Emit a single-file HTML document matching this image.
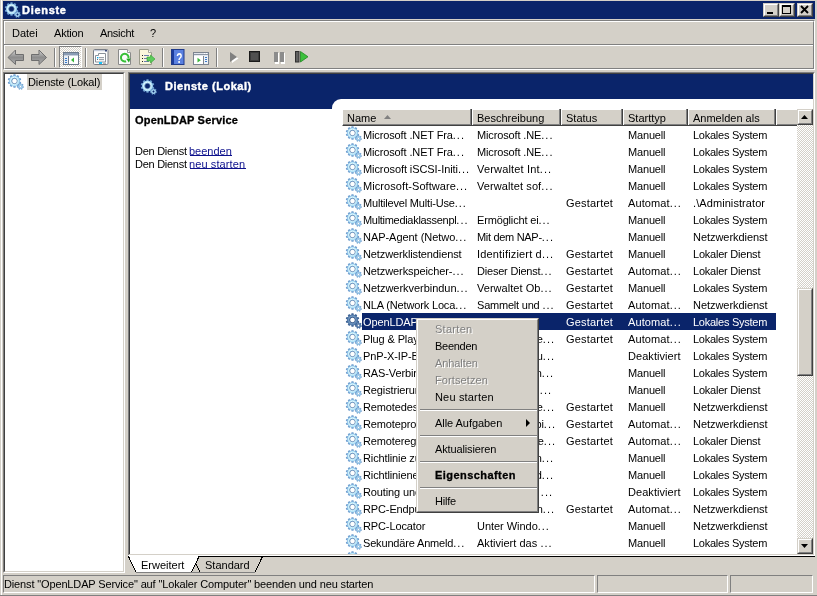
<!DOCTYPE html>
<html><head><meta charset="utf-8"><title>Dienste</title>
<style>
*{margin:0;padding:0;box-sizing:border-box}
html,body{width:817px;height:596px;overflow:hidden;background:#d4d0c8;font-family:"Liberation Sans",sans-serif;font-size:11px;color:#000}
.a{position:absolute}
.t{position:absolute;white-space:nowrap;line-height:13px}
.row{position:absolute;left:0;width:433px;height:17px}
.row .c{position:absolute;top:3px;line-height:13px;white-space:nowrap}
.row .gi{position:absolute;left:2px;top:0}
.row.sel .c{color:#fff}
.el{letter-spacing:1px}
.mi{position:absolute;line-height:13px;white-space:nowrap;letter-spacing:-0.25px}
.dis{color:#808080;text-shadow:1px 1px 0 #fff}
.msep{position:absolute;left:3px;width:117px;height:2px;border-top:1px solid #808080;border-bottom:1px solid #fff}
.chk{background-color:#fff;background-image:repeating-conic-gradient(#d4d0c8 0 25%,#fff 0 50%);background-size:2px 2px}
#w{position:absolute;left:0;top:0;width:817px;height:596px;will-change:transform}
</style></head><body><div id="w">
<svg width="0" height="0" style="position:absolute">
<defs>
<g id="gear"><path d="M6.44 1.60 L6.44 0.28 L8.56 0.28 L8.56 1.60 L9.81 2.01 L10.59 0.94 L12.31 2.19 L11.53 3.26 L12.30 4.32 L13.56 3.91 L14.22 5.94 L12.96 6.34 L12.96 7.66 L14.22 8.06 L13.56 10.09 L12.30 9.68 L11.53 10.74 L12.31 11.81 L10.59 13.06 L9.81 11.99 L8.56 12.40 L8.56 13.72 L6.44 13.72 L6.44 12.40 L5.19 11.99 L4.41 13.06 L2.69 11.81 L3.47 10.74 L2.70 9.68 L1.44 10.09 L0.78 8.06 L2.04 7.66 L2.04 6.34 L0.78 5.94 L1.44 3.91 L2.70 4.32 L3.47 3.26 L2.69 2.19 L4.41 0.94 L5.19 2.01Z M10.00 7.00 A2.5 2.5 0 1 0 5.00 7.00 A2.5 2.5 0 1 0 10.00 7.00Z" fill-rule="evenodd" fill="#6f9fd0"/><circle cx="7.5" cy="7" r="4.15" fill="none" stroke="#b2e2f8" stroke-width="2.1"/><circle cx="7.3" cy="6.8" r="3.6" fill="none" stroke="#e4faff" stroke-width="0.9"/><circle cx="7.5" cy="7" r="2.75" fill="none" stroke="#5a7ea8" stroke-width="0.6"/><path d="M12.76 10.11 L12.67 9.20 L14.33 9.20 L14.24 10.11 L14.91 10.43 L15.56 9.79 L16.60 11.09 L15.83 11.59 L15.99 12.31 L16.90 12.42 L16.53 14.04 L15.66 13.75 L15.20 14.33 L15.68 15.11 L14.18 15.83 L13.87 14.97 L13.13 14.97 L12.82 15.83 L11.32 15.11 L11.80 14.33 L11.34 13.75 L10.47 14.04 L10.10 12.42 L11.01 12.31 L11.17 11.59 L10.40 11.09 L11.44 9.79 L12.09 10.43Z M14.40 12.50 A0.9 0.9 0 1 0 12.60 12.50 A0.9 0.9 0 1 0 14.40 12.50Z" fill-rule="evenodd" fill="#6f9fd0"/><circle cx="13.5" cy="12.5" r="1.75" fill="none" stroke="#b8e4f8" stroke-width="0.9"/></g>
<g id="gears"><path d="M6.44 1.60 L6.44 0.28 L8.56 0.28 L8.56 1.60 L9.81 2.01 L10.59 0.94 L12.31 2.19 L11.53 3.26 L12.30 4.32 L13.56 3.91 L14.22 5.94 L12.96 6.34 L12.96 7.66 L14.22 8.06 L13.56 10.09 L12.30 9.68 L11.53 10.74 L12.31 11.81 L10.59 13.06 L9.81 11.99 L8.56 12.40 L8.56 13.72 L6.44 13.72 L6.44 12.40 L5.19 11.99 L4.41 13.06 L2.69 11.81 L3.47 10.74 L2.70 9.68 L1.44 10.09 L0.78 8.06 L2.04 7.66 L2.04 6.34 L0.78 5.94 L1.44 3.91 L2.70 4.32 L3.47 3.26 L2.69 2.19 L4.41 0.94 L5.19 2.01Z M10.00 7.00 A2.5 2.5 0 1 0 5.00 7.00 A2.5 2.5 0 1 0 10.00 7.00Z" fill-rule="evenodd" fill="#3d6294"/><circle cx="7.5" cy="7" r="4.15" fill="none" stroke="#5a82b0" stroke-width="2.1"/><circle cx="7.3" cy="6.8" r="3.6" fill="none" stroke="#7aa0c8" stroke-width="0.9"/><circle cx="7.5" cy="7" r="2.75" fill="none" stroke="#2a4a7a" stroke-width="0.6"/><path d="M12.76 10.11 L12.67 9.20 L14.33 9.20 L14.24 10.11 L14.91 10.43 L15.56 9.79 L16.60 11.09 L15.83 11.59 L15.99 12.31 L16.90 12.42 L16.53 14.04 L15.66 13.75 L15.20 14.33 L15.68 15.11 L14.18 15.83 L13.87 14.97 L13.13 14.97 L12.82 15.83 L11.32 15.11 L11.80 14.33 L11.34 13.75 L10.47 14.04 L10.10 12.42 L11.01 12.31 L11.17 11.59 L10.40 11.09 L11.44 9.79 L12.09 10.43Z M14.40 12.50 A0.9 0.9 0 1 0 12.60 12.50 A0.9 0.9 0 1 0 14.40 12.50Z" fill-rule="evenodd" fill="#3d6294"/><circle cx="13.5" cy="12.5" r="1.75" fill="none" stroke="#6a90bc" stroke-width="0.9"/></g>
<linearGradient id="ag" x1="0" y1="0" x2="0" y2="1"><stop offset="0" stop-color="#d8d8d8"/><stop offset="0.5" stop-color="#8c8c8c"/><stop offset="1" stop-color="#b0b0b0"/></linearGradient>
</defs></svg>

<!-- window frame -->
<div class="a" style="left:1px;top:0;width:1px;height:596px;background:#fff"></div>
<div class="a" style="left:0;top:595px;width:817px;height:1px;background:#808080"></div>

<!-- title bar -->
<div class="a" style="left:3px;top:1px;width:812px;height:18px;background:#0a246a"></div>
<svg class="a" style="left:4px;top:2px" width="17" height="17"><use href="#gear"/></svg>
<div class="t" style="left:22px;top:4px;color:#fff;font-weight:bold;letter-spacing:0.7px;-webkit-text-stroke:0.4px #fff">Dienste</div>
<div class="a" style="left:763px;top:3px;width:16px;height:14px;border-style:solid;border-width:1px;border-color:#d4d0c8 #404040 #404040 #d4d0c8;background:#d4d0c8"></div><div class="a" style="left:764px;top:4px;width:14px;height:12px;border-style:solid;border-width:1px;border-color:#fff #808080 #808080 #fff;"></div>
<div class="a" style="left:767px;top:12px;width:6px;height:2px;background:#000"></div>
<div class="a" style="left:779px;top:3px;width:16px;height:14px;border-style:solid;border-width:1px;border-color:#d4d0c8 #404040 #404040 #d4d0c8;background:#d4d0c8"></div><div class="a" style="left:780px;top:4px;width:14px;height:12px;border-style:solid;border-width:1px;border-color:#fff #808080 #808080 #fff;"></div>
<div class="a" style="left:782px;top:5px;width:9px;height:9px;border:1px solid #000;border-top-width:2px"></div>
<div class="a" style="left:797px;top:3px;width:16px;height:14px;border-style:solid;border-width:1px;border-color:#d4d0c8 #404040 #404040 #d4d0c8;background:#d4d0c8"></div><div class="a" style="left:798px;top:4px;width:14px;height:12px;border-style:solid;border-width:1px;border-color:#fff #808080 #808080 #fff;"></div>
<svg class="a" style="left:800px;top:5px" width="10" height="9"><path d="M1 1 L8 8 M8 1 L1 8" stroke="#000" stroke-width="1.9"/></svg>

<!-- rebar -->
<div class="a" style="left:3px;top:20px;width:812px;height:50px;border-style:solid;border-width:1px;border-color:#808080 #fff #fff #808080;"></div>
<div class="a" style="left:4px;top:21px;width:810px;height:48px;border-style:solid;border-width:1px;border-color:#fff #808080 #808080 #fff;"></div>
<div class="a" style="left:4px;top:44px;width:809px;height:1px;background:#808080"></div>
<div class="a" style="left:4px;top:45px;width:809px;height:1px;background:#fff"></div>
<div class="t" style="left:12px;top:27px">Datei</div>
<div class="t" style="left:54px;top:27px;letter-spacing:-0.2px">Aktion</div>
<div class="t" style="left:100px;top:27px;letter-spacing:-0.3px">Ansicht</div>
<div class="t" style="left:150px;top:27px">?</div>

<!-- toolbar -->
<svg class="a" style="left:7px;top:49px" width="18" height="17"><path d="M1 8.5 L8.5 1 L8.5 5.5 L16.5 5.5 L16.5 11.5 L8.5 11.5 L8.5 15.5 Z" fill="url(#ag)" stroke="#6e6e6e" stroke-width="1"/></svg>
<svg class="a" style="left:30px;top:49px" width="18" height="17"><path d="M16.5 8.5 L9 1 L9 5.5 L1.5 5.5 L1.5 11.5 L9 11.5 L9 15.5 Z" fill="url(#ag)" stroke="#6e6e6e" stroke-width="1"/></svg>
<div class="a" style="left:54px;top:48px;width:1px;height:19px;background:#808080"></div><div class="a" style="left:55px;top:48px;width:1px;height:19px;background:#fff"></div>
<div class="a" style="left:59px;top:46px;width:23px;height:22px;border-style:solid;border-width:1px;border-color:#808080 #fff #fff #808080;"></div>
<div class="a chk" style="left:60px;top:47px;width:21px;height:20px"></div>
<svg class="a" style="left:63px;top:52px" width="16" height="13"><rect x="0.5" y="0.5" width="15" height="12" fill="#fff" stroke="#6c7a8c"/><rect x="1" y="1" width="14" height="2" fill="#8a9cb4"/><rect x="1" y="3" width="14" height="1" fill="#c8d0dc"/><rect x="1" y="4" width="4" height="8" fill="#e8eef6"/><rect x="5" y="4" width="1" height="8" fill="#6c7a8c"/><rect x="2" y="6" width="2" height="1" fill="#3a7ac8"/><rect x="2" y="8" width="2" height="1" fill="#3a7ac8"/><rect x="2" y="10" width="2" height="1" fill="#3a7ac8"/><path d="M8 8 L11 5.5 L11 10.5Z" fill="#3cb83c"/></svg>
<div class="a" style="left:85px;top:48px;width:1px;height:19px;background:#808080"></div><div class="a" style="left:86px;top:48px;width:1px;height:19px;background:#fff"></div>
<svg class="a" style="left:93px;top:49px" width="16" height="16"><rect x="0.5" y="0.5" width="14.5" height="15" rx="1.2" fill="#fdfdfd" stroke="#7a7e86"/><rect x="1" y="1" width="13.5" height="1.2" fill="#c4ccdc"/><rect x="12" y="1" width="2" height="1.5" fill="#3a4a7a"/><path d="M2.5 6.5 L5.5 6.5 L5.5 4.5 L12.5 4.5 L12.5 13 L2.5 13 Z" fill="#fff" stroke="#8a929a"/><rect x="4" y="8" width="1.4" height="1.4" fill="#10b0f0"/><rect x="4" y="10" width="1" height="1" fill="#6a7078"/><rect x="6" y="8" width="5" height="1.2" fill="#9aa0a8"/><rect x="6" y="10" width="5" height="1.2" fill="#9aa0a8"/><rect x="6" y="13" width="3" height="2" fill="#18c0f8"/><rect x="10" y="13.5" width="3" height="1.5" fill="#b8b8b8"/></svg>
<svg class="a" style="left:118px;top:49px" width="14" height="16"><path d="M0.5 0.5 L9.5 0.5 L12.5 3.5 L12.5 15.5 L0.5 15.5Z" fill="#fbfbfb" stroke="#8a8a8a"/><path d="M9.5 0.5 L9.5 3.5 L12.5 3.5" fill="#fff" stroke="#9a9a9a"/><path d="M8.1 12.2 A3.8 3.8 0 1 1 10.5 9.3" fill="none" stroke="#38c038" stroke-width="2"/><path d="M8.2 9.8 L12.6 9.4 L10.9 13.4Z" fill="#20a820"/></svg>
<svg class="a" style="left:139px;top:49px" width="17" height="16"><path d="M0.5 0.5 L9.5 0.5 L12.5 3.5 L12.5 15.5 L0.5 15.5Z" fill="#fbf6dc" stroke="#9a9a8a"/><path d="M9.5 0.5 L9.5 3.5 L12.5 3.5" fill="#fff" stroke="#a8a8a0"/><rect x="3" y="6" width="1" height="1" fill="#202020"/><rect x="5" y="6" width="5" height="1" fill="#7080b0"/><rect x="3" y="9" width="1" height="1" fill="#202020"/><rect x="5" y="9" width="5" height="1" fill="#7080b0"/><rect x="3" y="12" width="1" height="1" fill="#202020"/><rect x="5" y="12" width="5" height="1" fill="#7080b0"/><path d="M8 8 L11.5 8 L11.5 6 L16 10 L11.5 14 L11.5 12 L8 12 Z" fill="#5ccc5c" stroke="#30a030" stroke-width="0.6"/></svg>
<div class="a" style="left:162px;top:48px;width:1px;height:19px;background:#808080"></div><div class="a" style="left:163px;top:48px;width:1px;height:19px;background:#fff"></div>
<svg class="a" style="left:171px;top:49px" width="14" height="16"><rect x="0" y="0" width="13" height="16" fill="#3c64d0"/><rect x="0" y="0" width="3" height="16" fill="#1c3c9c"/><rect x="3" y="0" width="10" height="16" fill="#5a80e0"/><rect x="0.5" y="0.5" width="12.5" height="15" fill="none" stroke="#203a8a"/><text x="0" y="0" transform="translate(8.3 13.6) scale(0.72 1)" font-family="Liberation Sans" font-weight="bold" font-size="14" fill="#fff" text-anchor="middle">?</text></svg>
<svg class="a" style="left:193px;top:52px" width="16" height="13"><rect x="0.5" y="0.5" width="15" height="12" fill="#fff" stroke="#7c8490"/><rect x="1" y="1" width="14" height="1" fill="#dfe3ea"/><rect x="11" y="1" width="1" height="1" fill="#fff"/><rect x="13" y="1" width="1" height="1" fill="#fff"/><rect x="1" y="2" width="14" height="1" fill="#8c96a4"/><rect x="1" y="3" width="14" height="1" fill="#e6eaf0"/><rect x="10" y="4" width="1" height="8" fill="#7c8490"/><rect x="11" y="4" width="4" height="8" fill="#eef2f8"/><rect x="12" y="5" width="2" height="1" fill="#3a7ac8"/><rect x="12" y="7" width="2" height="1" fill="#3a7ac8"/><rect x="12" y="9" width="2" height="1" fill="#3a7ac8"/><path d="M4.5 5.8 L7.8 8.2 L4.5 10.6Z" fill="#3cb83c"/></svg>
<div class="a" style="left:216px;top:48px;width:1px;height:19px;background:#808080"></div><div class="a" style="left:217px;top:48px;width:1px;height:19px;background:#fff"></div>
<svg class="a" style="left:229px;top:51px" width="11" height="13"><path d="M2 2 L8.5 6.5 L2 11Z" fill="#fff" transform="translate(1,1)"/><path d="M1 1 L8 6 L1 11Z" fill="#808080"/></svg>
<svg class="a" style="left:249px;top:51px" width="12" height="12"><rect x="0.5" y="0.5" width="10" height="10" fill="#3a3a3a" stroke="#1a1a1a"/><rect x="2" y="2" width="7" height="7" fill="#505050"/></svg>
<svg class="a" style="left:273px;top:51px" width="12" height="13"><rect x="2" y="2" width="4" height="11" fill="#fff"/><rect x="8" y="2" width="4" height="11" fill="#fff"/><rect x="1" y="1" width="4" height="10" fill="#8c8c8c"/><rect x="7" y="1" width="4" height="10" fill="#8c8c8c"/></svg>
<svg class="a" style="left:295px;top:51px" width="15" height="12"><rect x="0.5" y="0.5" width="3.5" height="10.5" fill="#606060" stroke="#303030"/><path d="M5.5 0.5 L13 5.75 L5.5 11Z" fill="#3cc03c" stroke="#208820" stroke-width="0.8"/></svg>

<!-- tree pane -->
<div class="a" style="left:3px;top:72px;width:122px;height:501px;border-style:solid;border-width:1px;border-color:#808080 #fff #fff #808080;"></div><div class="a" style="left:4px;top:73px;width:120px;height:499px;border-style:solid;border-width:1px;border-color:#404040 #d4d0c8 #d4d0c8 #404040;background:#fff"></div>
<svg class="a" style="left:7px;top:74px" width="17" height="17"><use href="#gear"/></svg>
<div class="a" style="left:27px;top:74px;width:75px;height:16px;background:#d4d0c8"></div>
<div class="t" style="left:28px;top:76px;letter-spacing:-0.12px">Dienste (Lokal)</div>

<!-- right pane -->
<div class="a" style="left:128px;top:72px;width:687px;height:484px;border-style:solid;border-width:1px;border-color:#808080 #fff #fff #808080;"></div><div class="a" style="left:129px;top:73px;width:685px;height:482px;border-style:solid;border-width:1px;border-color:#404040 #d4d0c8 #d4d0c8 #404040;background:#fff"></div>
<div class="a" style="left:130px;top:74px;width:683px;height:25px;background:#0a246a"></div>
<div class="a" style="left:130px;top:99px;width:203px;height:10px;background:#0a246a"></div>
<div class="a" style="left:332px;top:99px;width:20px;height:10px;background:#0a246a"></div>
<div class="a" style="left:332px;top:99px;width:20px;height:12px;background:#fff;border-top-left-radius:9px"></div>
<svg class="a" style="left:140px;top:79px" width="17" height="17"><use href="#gear"/></svg>
<div class="t" style="left:165px;top:80px;color:#fff;font-weight:bold;letter-spacing:0.53px;-webkit-text-stroke:0.4px #fff">Dienste (Lokal)</div>
<div class="t" style="left:135px;top:114px;font-weight:bold;letter-spacing:0.19px;-webkit-text-stroke:0.3px #000">OpenLDAP Service</div>
<div class="t" style="left:135px;top:145px;letter-spacing:-0.27px">Den Dienst</div><div class="t" style="left:189px;top:145px;color:#0c108c">beenden</div><div class="a" style="left:190px;top:155px;width:42px;height:1px;background:#0c108c"></div>
<div class="t" style="left:135px;top:158px;letter-spacing:-0.27px">Den Dienst</div><div class="t" style="left:189px;top:158px;color:#0c108c;letter-spacing:0.1px">neu starten</div><div class="a" style="left:190px;top:168px;width:56px;height:1px;background:#0c108c"></div>

<!-- list header -->
<div class="a" style="left:342px;top:109px;width:455px;height:17px;background:#d4d0c8;border-top:1px solid #fff;border-left:1px solid #fff;border-bottom:1px solid #404040">
  <div class="a" style="left:0;top:14px;width:454px;height:1px;background:#808080"></div>
</div>
<span class="t" style="left:347px;top:112px">Name</span>
<svg class="a" style="left:384px;top:115px" width="7" height="4"><path d="M3.5 0 L7 4 L0 4 Z" fill="#808080"/></svg>
<div class="a" style="left:470px;top:109px;width:1px;height:16px;background:#808080"></div><div class="a" style="left:471px;top:109px;width:1px;height:16px;background:#404040"></div><div class="a" style="left:472px;top:110px;width:1px;height:15px;background:#fff"></div><div class="a" style="left:559px;top:109px;width:1px;height:16px;background:#808080"></div><div class="a" style="left:560px;top:109px;width:1px;height:16px;background:#404040"></div><div class="a" style="left:561px;top:110px;width:1px;height:15px;background:#fff"></div><div class="a" style="left:621px;top:109px;width:1px;height:16px;background:#808080"></div><div class="a" style="left:622px;top:109px;width:1px;height:16px;background:#404040"></div><div class="a" style="left:623px;top:110px;width:1px;height:15px;background:#fff"></div><div class="a" style="left:686px;top:109px;width:1px;height:16px;background:#808080"></div><div class="a" style="left:687px;top:109px;width:1px;height:16px;background:#404040"></div><div class="a" style="left:688px;top:110px;width:1px;height:15px;background:#fff"></div><div class="a" style="left:774px;top:109px;width:1px;height:16px;background:#808080"></div><div class="a" style="left:775px;top:109px;width:1px;height:16px;background:#404040"></div><div class="a" style="left:776px;top:110px;width:1px;height:15px;background:#fff"></div>
<span class="t" style="left:477px;top:112px">Beschreibung</span>
<span class="t" style="left:566px;top:112px">Status</span>
<span class="t" style="left:628px;top:112px">Starttyp</span>
<span class="t" style="left:693px;top:112px">Anmelden als</span>

<!-- selection -->
<div class="a" style="left:362px;top:313px;width:414px;height:17px;background:#0a246a"></div>
<div class="a" style="left:343px;top:126px;width:455px;height:428px;overflow:hidden">
<div class="row" style="top:0px"><svg class="gi" width="17" height="17"><use href="#gear"/></svg><span class="c" style="left:20px;letter-spacing:-0.128px">Microsoft .NET Fra<span class="el">...</span></span><span class="c" style="left:134px;letter-spacing:-0.131px">Microsoft .NE<span class="el">...</span></span><span class="c" style="left:285px;letter-spacing:-0.17px">Manuell</span><span class="c" style="left:350px;letter-spacing:-0.25px">Lokales System</span></div><div class="row" style="top:17px"><svg class="gi" width="17" height="17"><use href="#gear"/></svg><span class="c" style="left:20px;letter-spacing:-0.128px">Microsoft .NET Fra<span class="el">...</span></span><span class="c" style="left:134px;letter-spacing:-0.131px">Microsoft .NE<span class="el">...</span></span><span class="c" style="left:285px;letter-spacing:-0.17px">Manuell</span><span class="c" style="left:350px;letter-spacing:-0.25px">Lokales System</span></div><div class="row" style="top:34px"><svg class="gi" width="17" height="17"><use href="#gear"/></svg><span class="c" style="left:20px;letter-spacing:-0.081px">Microsoft iSCSI-Initi<span class="el">...</span></span><span class="c" style="left:134px;letter-spacing:0.177px">Verwaltet Int<span class="el">...</span></span><span class="c" style="left:285px;letter-spacing:-0.17px">Manuell</span><span class="c" style="left:350px;letter-spacing:-0.25px">Lokales System</span></div><div class="row" style="top:51px"><svg class="gi" width="17" height="17"><use href="#gear"/></svg><span class="c" style="left:20px;letter-spacing:0.072px">Microsoft-Software<span class="el">...</span></span><span class="c" style="left:134px;letter-spacing:0.1px">Verwaltet sof<span class="el">...</span></span><span class="c" style="left:285px;letter-spacing:-0.17px">Manuell</span><span class="c" style="left:350px;letter-spacing:-0.25px">Lokales System</span></div><div class="row" style="top:68px"><svg class="gi" width="17" height="17"><use href="#gear"/></svg><span class="c" style="left:20px;letter-spacing:-0.185px">Multilevel Multi-Use<span class="el">...</span></span><span class="c" style="left:223px;letter-spacing:0.19px">Gestartet</span><span class="c" style="left:285px;letter-spacing:0.11px">Automat<span class="el">...</span></span><span class="c" style="left:350px;letter-spacing:0.08px">.\Administrator</span></div><div class="row" style="top:85px"><svg class="gi" width="17" height="17"><use href="#gear"/></svg><span class="c" style="left:20px;letter-spacing:-0.3px">Multimediaklassenpl<span class="el">...</span></span><span class="c" style="left:134px;letter-spacing:-0.162px">Ermöglicht ei<span class="el">...</span></span><span class="c" style="left:285px;letter-spacing:-0.17px">Manuell</span><span class="c" style="left:350px;letter-spacing:-0.25px">Lokales System</span></div><div class="row" style="top:102px"><svg class="gi" width="17" height="17"><use href="#gear"/></svg><span class="c" style="left:20px;letter-spacing:-0.044px">NAP-Agent (Netwo<span class="el">...</span></span><span class="c" style="left:134px;letter-spacing:-0.308px">Mit dem NAP-<span class="el">...</span></span><span class="c" style="left:285px;letter-spacing:-0.17px">Manuell</span><span class="c" style="left:350px;letter-spacing:-0.05px">Netzwerkdienst</span></div><div class="row" style="top:119px"><svg class="gi" width="17" height="17"><use href="#gear"/></svg><span class="c" style="left:20px;letter-spacing:-0.12px">Netzwerklistendienst</span><span class="c" style="left:134px;letter-spacing:0.167px">Identifiziert d<span class="el">...</span></span><span class="c" style="left:223px;letter-spacing:0.19px">Gestartet</span><span class="c" style="left:285px;letter-spacing:-0.17px">Manuell</span><span class="c" style="left:350px;letter-spacing:-0.22px">Lokaler Dienst</span></div><div class="row" style="top:136px"><svg class="gi" width="17" height="17"><use href="#gear"/></svg><span class="c" style="left:20px;letter-spacing:-0.1px">Netzwerkspeicher-<span class="el">...</span></span><span class="c" style="left:134px;letter-spacing:-0.2px">Dieser Dienst<span class="el">...</span></span><span class="c" style="left:223px;letter-spacing:0.19px">Gestartet</span><span class="c" style="left:285px;letter-spacing:0.11px">Automat<span class="el">...</span></span><span class="c" style="left:350px;letter-spacing:-0.22px">Lokaler Dienst</span></div><div class="row" style="top:153px"><svg class="gi" width="17" height="17"><use href="#gear"/></svg><span class="c" style="left:20px;letter-spacing:-0.041px">Netzwerkverbindun<span class="el">...</span></span><span class="c" style="left:134px;letter-spacing:0.033px">Verwaltet Ob<span class="el">...</span></span><span class="c" style="left:223px;letter-spacing:0.19px">Gestartet</span><span class="c" style="left:285px;letter-spacing:-0.17px">Manuell</span><span class="c" style="left:350px;letter-spacing:-0.25px">Lokales System</span></div><div class="row" style="top:170px"><svg class="gi" width="17" height="17"><use href="#gear"/></svg><span class="c" style="left:20px;letter-spacing:-0.153px">NLA (Network Loca<span class="el">...</span></span><span class="c" style="left:134px;letter-spacing:-0.208px">Sammelt und <span class="el">...</span></span><span class="c" style="left:223px;letter-spacing:0.19px">Gestartet</span><span class="c" style="left:285px;letter-spacing:0.11px">Automat<span class="el">...</span></span><span class="c" style="left:350px;letter-spacing:-0.05px">Netzwerkdienst</span></div><div class="row sel" style="top:187px"><svg class="gi" width="17" height="17"><use href="#gears"/></svg><span class="c" style="left:20px;letter-spacing:-0.12px">OpenLDAP Service</span><span class="c" style="left:223px;letter-spacing:0.19px">Gestartet</span><span class="c" style="left:285px;letter-spacing:0.11px">Automat<span class="el">...</span></span><span class="c" style="left:350px;letter-spacing:-0.25px">Lokales System</span></div><div class="row" style="top:204px"><svg class="gi" width="17" height="17"><use href="#gear"/></svg><span class="c" style="left:20px;letter-spacing:-0.12px">Plug &amp; Play</span><span class="c" style="right:221px;letter-spacing:-0.12px">Ermöglicht eine<span class="el">...</span></span><span class="c" style="left:223px;letter-spacing:0.19px">Gestartet</span><span class="c" style="left:285px;letter-spacing:0.11px">Automat<span class="el">...</span></span><span class="c" style="left:350px;letter-spacing:-0.25px">Lokales System</span></div><div class="row" style="top:221px"><svg class="gi" width="17" height="17"><use href="#gear"/></svg><span class="c" style="left:20px;letter-spacing:-0.12px">PnP-X-IP-Busenu<span class="el">...</span></span><span class="c" style="right:221px;letter-spacing:-0.12px">Der PnP-X-Bu<span class="el">...</span></span><span class="c" style="left:285px;letter-spacing:0.05px">Deaktiviert</span><span class="c" style="left:350px;letter-spacing:-0.25px">Lokales System</span></div><div class="row" style="top:238px"><svg class="gi" width="17" height="17"><use href="#gear"/></svg><span class="c" style="left:20px;letter-spacing:-0.12px">RAS-Verbindungs<span class="el">...</span></span><span class="c" style="right:222px;letter-spacing:-0.12px">Verwaltet DFÜn<span class="el">...</span></span><span class="c" style="left:285px;letter-spacing:-0.17px">Manuell</span><span class="c" style="left:350px;letter-spacing:-0.25px">Lokales System</span></div><div class="row" style="top:255px"><svg class="gi" width="17" height="17"><use href="#gear"/></svg><span class="c" style="left:20px;letter-spacing:-0.12px">Registrierungsd<span class="el">...</span></span><span class="c" style="right:224px;letter-spacing:-0.12px">Ermöglicht das <span class="el">...</span></span><span class="c" style="left:285px;letter-spacing:-0.17px">Manuell</span><span class="c" style="left:350px;letter-spacing:-0.22px">Lokaler Dienst</span></div><div class="row" style="top:272px"><svg class="gi" width="17" height="17"><use href="#gear"/></svg><span class="c" style="left:20px;letter-spacing:-0.12px">Remotedesktop<span class="el">...</span></span><span class="c" style="right:221px;letter-spacing:-0.12px">Ermöglicht Be<span class="el">...</span></span><span class="c" style="left:223px;letter-spacing:0.19px">Gestartet</span><span class="c" style="left:285px;letter-spacing:-0.17px">Manuell</span><span class="c" style="left:350px;letter-spacing:-0.05px">Netzwerkdienst</span></div><div class="row" style="top:289px"><svg class="gi" width="17" height="17"><use href="#gear"/></svg><span class="c" style="left:20px;letter-spacing:-0.12px">Remoteprozedu<span class="el">...</span></span><span class="c" style="right:220px;letter-spacing:-0.12px">Der RPCSS-Dpi<span class="el">...</span></span><span class="c" style="left:223px;letter-spacing:0.19px">Gestartet</span><span class="c" style="left:285px;letter-spacing:0.11px">Automat<span class="el">...</span></span><span class="c" style="left:350px;letter-spacing:-0.05px">Netzwerkdienst</span></div><div class="row" style="top:306px"><svg class="gi" width="17" height="17"><use href="#gear"/></svg><span class="c" style="left:20px;letter-spacing:-0.12px">Remoteregistri<span class="el">...</span></span><span class="c" style="right:220px;letter-spacing:-0.12px">Ermöglicht Re<span class="el">...</span></span><span class="c" style="left:223px;letter-spacing:0.19px">Gestartet</span><span class="c" style="left:285px;letter-spacing:0.11px">Automat<span class="el">...</span></span><span class="c" style="left:350px;letter-spacing:-0.22px">Lokaler Dienst</span></div><div class="row" style="top:323px"><svg class="gi" width="17" height="17"><use href="#gear"/></svg><span class="c" style="left:20px;letter-spacing:-0.12px">Richtlinie zum E<span class="el">...</span></span><span class="c" style="right:222px;letter-spacing:-0.12px">Ermöglicht un<span class="el">...</span></span><span class="c" style="left:285px;letter-spacing:-0.17px">Manuell</span><span class="c" style="left:350px;letter-spacing:-0.25px">Lokales System</span></div><div class="row" style="top:340px"><svg class="gi" width="17" height="17"><use href="#gear"/></svg><span class="c" style="left:20px;letter-spacing:-0.12px">Richtlinienerge<span class="el">...</span></span><span class="c" style="right:222px;letter-spacing:-0.12px">Bietet Netzd<span class="el">...</span></span><span class="c" style="left:285px;letter-spacing:-0.17px">Manuell</span><span class="c" style="left:350px;letter-spacing:-0.25px">Lokales System</span></div><div class="row" style="top:357px"><svg class="gi" width="17" height="17"><use href="#gear"/></svg><span class="c" style="left:20px;letter-spacing:-0.12px">Routing und RAS</span><span class="c" style="right:223px;letter-spacing:-0.12px">Bietet Unter <span class="el">...</span></span><span class="c" style="left:285px;letter-spacing:0.05px">Deaktiviert</span><span class="c" style="left:350px;letter-spacing:-0.25px">Lokales System</span></div><div class="row" style="top:374px"><svg class="gi" width="17" height="17"><use href="#gear"/></svg><span class="c" style="left:20px;letter-spacing:-0.12px">RPC-Endpunktzu<span class="el">...</span></span><span class="c" style="right:221px;letter-spacing:-0.12px">Löst RPC-Schn<span class="el">...</span></span><span class="c" style="left:223px;letter-spacing:0.19px">Gestartet</span><span class="c" style="left:285px;letter-spacing:0.11px">Automat<span class="el">...</span></span><span class="c" style="left:350px;letter-spacing:-0.05px">Netzwerkdienst</span></div><div class="row" style="top:391px"><svg class="gi" width="17" height="17"><use href="#gear"/></svg><span class="c" style="left:20px;letter-spacing:-0.12px">RPC-Locator</span><span class="c" style="left:134px;letter-spacing:-0.036px">Unter Windo<span class="el">...</span></span><span class="c" style="left:285px;letter-spacing:-0.17px">Manuell</span><span class="c" style="left:350px;letter-spacing:-0.05px">Netzwerkdienst</span></div><div class="row" style="top:408px"><svg class="gi" width="17" height="17"><use href="#gear"/></svg><span class="c" style="left:20px;letter-spacing:-0.169px">Sekundäre Anmeld<span class="el">...</span></span><span class="c" style="left:134px;letter-spacing:0.029px">Aktiviert das <span class="el">...</span></span><span class="c" style="left:285px;letter-spacing:-0.17px">Manuell</span><span class="c" style="left:350px;letter-spacing:-0.25px">Lokales System</span></div><div class="row" style="top:425px"><svg class="gi" width="17" height="17"><use href="#gear"/></svg><span class="c" style="left:20px;letter-spacing:-0.12px">Server</span></div>
</div>

<!-- scrollbar -->
<div class="a chk" style="left:797px;top:125px;width:16px;height:413px"></div>
<div class="a" style="left:797px;top:109px;width:16px;height:16px;border-style:solid;border-width:1px;border-color:#d4d0c8 #404040 #404040 #d4d0c8;background:#d4d0c8"></div><div class="a" style="left:798px;top:110px;width:14px;height:14px;border-style:solid;border-width:1px;border-color:#fff #808080 #808080 #fff;"></div>
<svg class="a" style="left:801px;top:115px" width="7" height="4"><path d="M3.5 0 L7 4 L0 4Z" fill="#000"/></svg>
<div class="a" style="left:797px;top:288px;width:16px;height:88px;border-style:solid;border-width:1px;border-color:#d4d0c8 #404040 #404040 #d4d0c8;background:#d4d0c8"></div><div class="a" style="left:798px;top:289px;width:14px;height:86px;border-style:solid;border-width:1px;border-color:#fff #808080 #808080 #fff;"></div>
<div class="a" style="left:797px;top:538px;width:16px;height:16px;border-style:solid;border-width:1px;border-color:#d4d0c8 #404040 #404040 #d4d0c8;background:#d4d0c8"></div><div class="a" style="left:798px;top:539px;width:14px;height:14px;border-style:solid;border-width:1px;border-color:#fff #808080 #808080 #fff;"></div>
<svg class="a" style="left:801px;top:544px" width="7" height="4"><path d="M0 0 L7 0 L3.5 4Z" fill="#000"/></svg>

<!-- context menu -->
<div class="a" style="left:416px;top:318px;width:123px;height:195px;background:#d4d0c8;border-style:solid;border-width:1px;border-color:#d4d0c8 #404040 #404040 #d4d0c8">
 <div class="a" style="left:0;top:0;width:121px;height:193px;border-style:solid;border-width:1px;border-color:#fff #808080 #808080 #fff"></div>
 <div class="mi dis" style="left:18px;top:4px;letter-spacing:0.28px">Starten</div>
 <div class="mi" style="left:18px;top:21px;letter-spacing:-0.28px">Beenden</div>
 <div class="mi dis" style="left:18px;top:38px;letter-spacing:-0.09px">Anhalten</div>
 <div class="mi dis" style="left:18px;top:55px;letter-spacing:0.11px">Fortsetzen</div>
 <div class="mi" style="left:18px;top:72px;letter-spacing:0.17px">Neu starten</div>
 <div class="msep" style="top:90px"></div>
 <div class="mi" style="left:18px;top:98px;letter-spacing:-0.05px">Alle Aufgaben</div>
 <svg class="a" style="left:109px;top:100px" width="5" height="9"><path d="M0 0 L4 4 L0 8Z" fill="#000"/></svg>
 <div class="msep" style="top:116px"></div>
 <div class="mi" style="left:18px;top:124px;letter-spacing:-0.13px">Aktualisieren</div>
 <div class="msep" style="top:142px"></div>
 <div class="mi" style="left:18px;top:150px;font-weight:bold;letter-spacing:0.44px;-webkit-text-stroke:0.3px #000">Eigenschaften</div>
 <div class="msep" style="top:168px"></div>
 <div class="mi" style="left:18px;top:176px;letter-spacing:-0.2px">Hilfe</div>
</div>

<!-- tabs -->
<svg class="a" style="left:128px;top:554px" width="687" height="20" shape-rendering="crispEdges">
 <rect x="1" y="0" width="685" height="1" fill="#d4d0c8"/>
 <rect x="0" y="1" width="687" height="1" fill="#fff"/>
 <path d="M0 2 L71 2 L63.5 18 L7.5 18 Z" fill="#fff"/>
 <path d="M71 2.5 L687 2.5" stroke="#000" stroke-width="1"/>
 <path d="M7.5 18.5 L127 18.5" stroke="#808080" stroke-width="1"/>
 <path d="M0.5 2.5 L8 18" stroke="#000" stroke-width="1"/>
 <path d="M71 2.5 L63.5 18" stroke="#000" stroke-width="1"/>
 <path d="M67.5 9.5 L72 18" stroke="#000" stroke-width="1"/>
 <path d="M134.5 2.5 L127 18" stroke="#000" stroke-width="1"/>
</svg>
<div class="t" style="left:141px;top:559px">Erweitert</div>
<div class="t" style="left:205px;top:559px">Standard</div>

<!-- status bar -->
<div class="a" style="left:3px;top:575px;width:592px;height:18px;border-style:solid;border-width:1px;border-color:#808080 #fff #fff #808080;"></div>
<div class="t" style="left:4px;top:578px;letter-spacing:-0.14px">Dienst "OpenLDAP Service" auf "Lokaler Computer" beenden und neu starten</div>
<div class="a" style="left:597px;top:575px;width:131px;height:18px;border-style:solid;border-width:1px;border-color:#808080 #fff #fff #808080;"></div>
<div class="a" style="left:730px;top:575px;width:83px;height:18px;border-style:solid;border-width:1px;border-color:#808080 #fff #fff #808080;"></div>
</div></body></html>
